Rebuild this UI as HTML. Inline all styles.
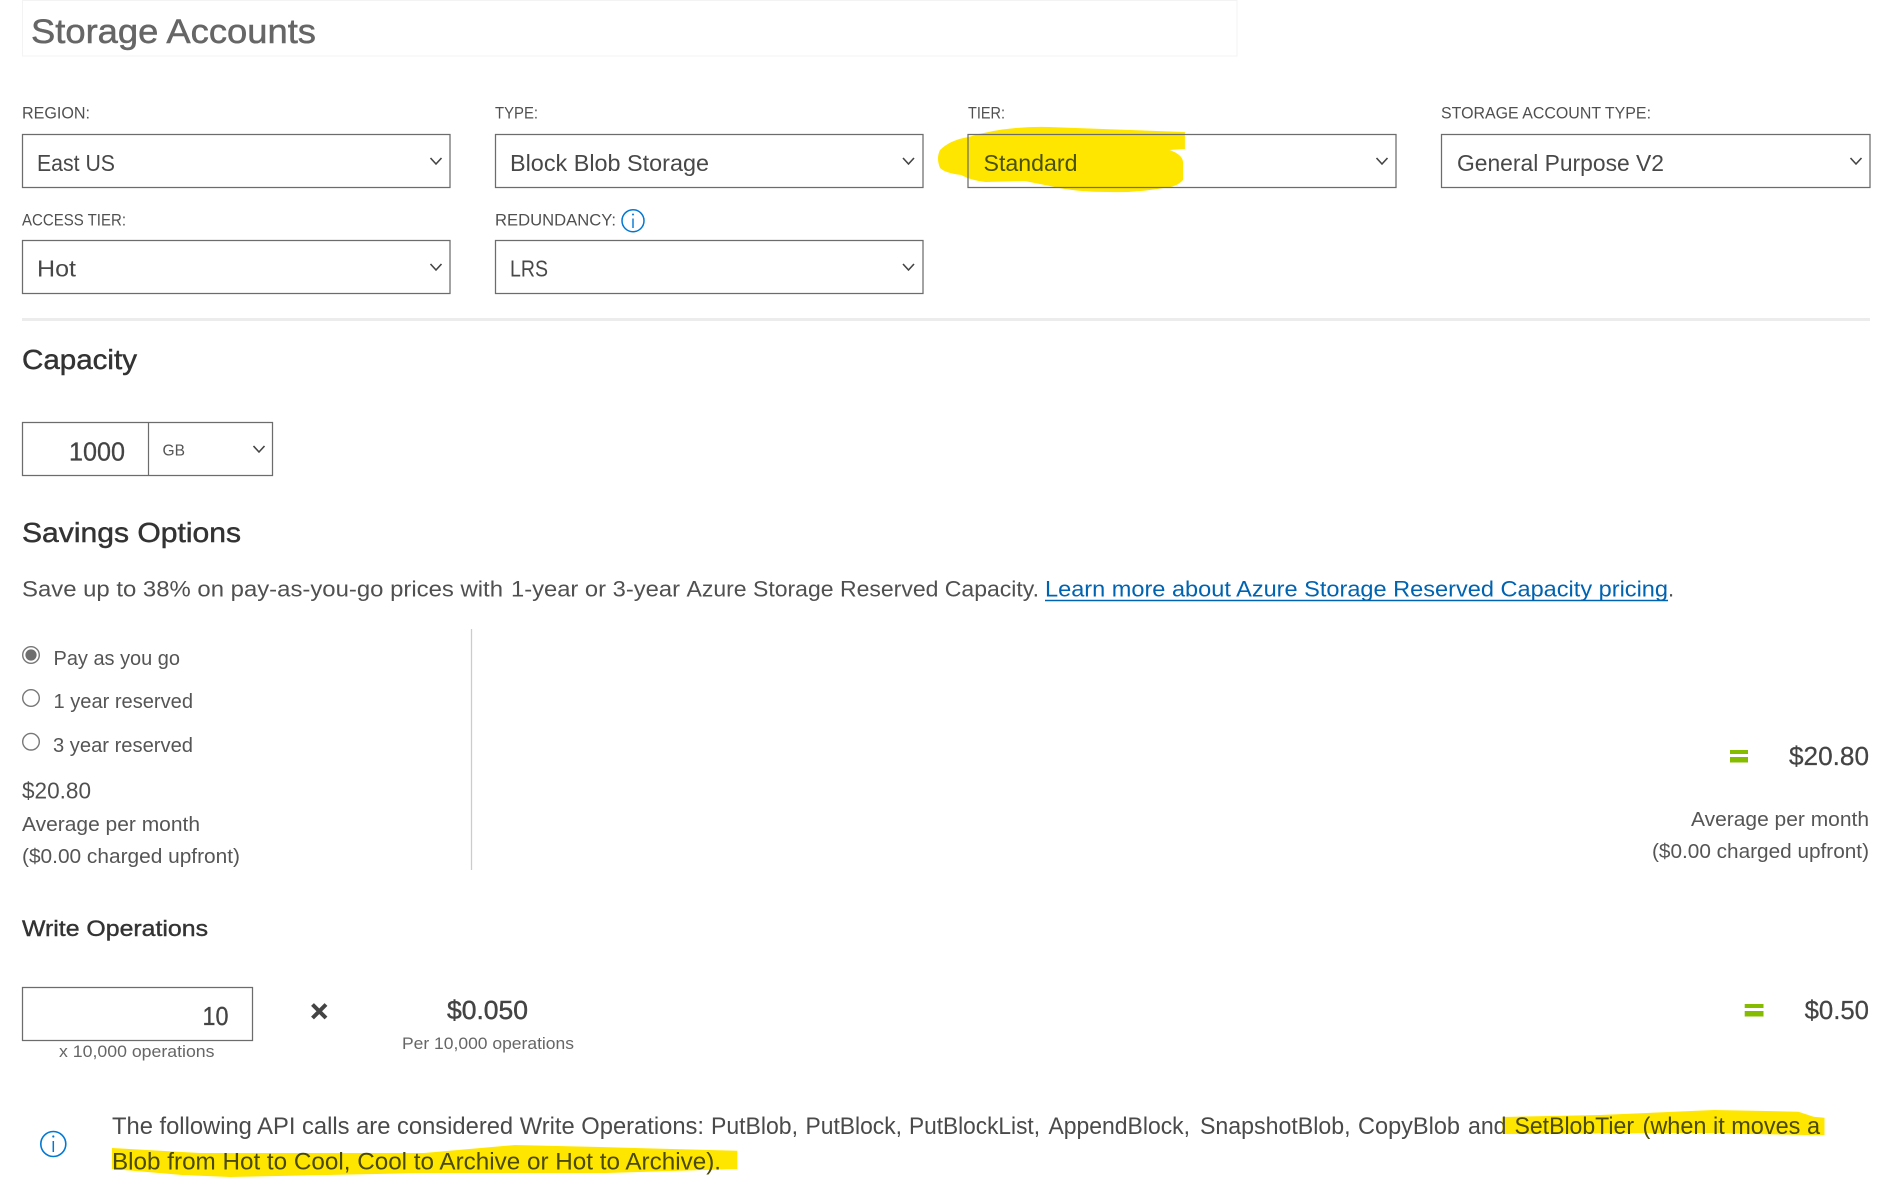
<!DOCTYPE html>
<html lang="en">
<head>
<meta charset="utf-8">
<title>Storage Accounts</title>
<style>
html,body{margin:0;padding:0;background:#fff;width:1888px;height:1188px;overflow:hidden}
svg{display:block}
text{font-family:"Liberation Sans",sans-serif;fill:#505050}
.lab{font-size:17px;fill:#505050}
.sel{font-size:23.5px;fill:#484848}
.h{font-size:27.5px;fill:#333;stroke:#333;stroke-width:.45px}
.sm{font-size:20px;fill:#555}
.p{font-size:22px;fill:#505050}
.n{font-size:24px;fill:#4a4a4a}
.y{font-size:24px;fill:#4a4a00}
.box{fill:none;stroke:#6c6c6c;stroke-width:1.25}
.chev{fill:none;stroke:#444;stroke-width:1.6}
.rad{fill:#fff;stroke:#777;stroke-width:1.4}
</style>
</head>
<body>
<svg xmlns="http://www.w3.org/2000/svg" width="1888" height="1188" viewBox="0 0 1888 1188">
<rect width="1888" height="1188" fill="#fff"/>

<!-- title -->
<rect x="22.5" y="0.5" width="1214.5" height="55.5" fill="#fff" stroke="#f3f3f3"/>
<text x="31" y="43" font-size="34.5" style="fill:#666" stroke="#666" stroke-width=".5" textLength="285" lengthAdjust="spacingAndGlyphs">Storage Accounts</text>

<!-- yellow highlights -->
<path d="M940 150 Q950 140 968.4 137 Q1005 126 1048.8 127 L1184.9 132 L1184.9 149 L1169.7 150 Q1183.5 155 1183 163 L1183 180 Q1177 187 1163.7 188 Q1135 193 1109.3 192 Q1075 192 1054.9 187 L1024.6 181 L985.3 182 Q970 180 961.2 175 Q945 173 940 168 Q936 158 940 150Z" fill="#ffe600"/>
<path d="M1502.3 1117 L1600 1115 L1713.9 1110 L1798.5 1111.7 L1813.6 1116.7 L1824.5 1117.7 L1824.5 1135 L1804.6 1135 L1700 1133 L1502.3 1134Z" fill="#ffe600"/>
<path d="M112 1148 L200 1153 L424 1153 L515 1145 L600 1147 L737.4 1150.7 L737.4 1169 L606 1173 L424 1173 L230 1177 L182 1175 L112 1169Z" fill="#ffe600"/>

<!-- labels row 1 -->
<text class="lab" x="22" y="118.5" textLength="68" lengthAdjust="spacingAndGlyphs">REGION:</text>
<text class="lab" x="495" y="118.5" textLength="43" lengthAdjust="spacingAndGlyphs">TYPE:</text>
<text class="lab" x="968" y="118.5" textLength="37" lengthAdjust="spacingAndGlyphs">TIER:</text>
<text class="lab" x="1441" y="118.5" textLength="210" lengthAdjust="spacingAndGlyphs">STORAGE ACCOUNT TYPE:</text>

<!-- selects row 1 -->
<rect class="box" x="22.5" y="134.5" width="427.5" height="53"/>
<rect class="box" x="495.5" y="134.5" width="427.5" height="53"/>
<rect class="box" x="968" y="134.5" width="428" height="53"/>
<rect class="box" x="1441.5" y="134.5" width="428.5" height="53"/>
<text class="sel" x="37" y="171" textLength="78" lengthAdjust="spacingAndGlyphs">East US</text>
<text class="sel" x="510" y="171" textLength="199" lengthAdjust="spacingAndGlyphs">Block Blob Storage</text>
<text class="sel" x="983.5" y="171" style="fill:#4a5200" textLength="94" lengthAdjust="spacingAndGlyphs">Standard</text>
<text class="sel" x="1457" y="171" textLength="207" lengthAdjust="spacingAndGlyphs">General Purpose V2</text>
<polyline class="chev" points="430.5,158 436,164 441.5,158"/>
<polyline class="chev" points="903,158 908.5,164 914,158"/>
<polyline class="chev" points="1376.5,158 1382,164 1387.5,158"/>
<polyline class="chev" points="1850.5,158 1856,164 1861.5,158"/>

<!-- labels row 2 -->
<text class="lab" x="22" y="225.5" textLength="104" lengthAdjust="spacingAndGlyphs">ACCESS TIER:</text>
<text class="lab" x="495" y="225.5" textLength="121" lengthAdjust="spacingAndGlyphs">REDUNDANCY:</text>
<circle cx="633" cy="220.7" r="11" fill="none" stroke="#0078d4" stroke-width="1.5"/>
<line x1="633" y1="218.5" x2="633" y2="228" stroke="#0078d4" stroke-width="1.4"/>
<circle cx="633" cy="214.5" r="1" fill="#0078d4"/>

<!-- selects row 2 -->
<rect class="box" x="22.5" y="240.5" width="427.5" height="53"/>
<rect class="box" x="495.5" y="240.5" width="427.5" height="53"/>
<text class="sel" x="37" y="276.5" textLength="39" lengthAdjust="spacingAndGlyphs">Hot</text>
<text class="sel" x="510" y="276.5" textLength="38" lengthAdjust="spacingAndGlyphs">LRS</text>
<polyline class="chev" points="430.5,264 436,270 441.5,264"/>
<polyline class="chev" points="903,264 908.5,270 914,264"/>

<rect x="22" y="318" width="1848" height="3" fill="#ececec"/>

<!-- capacity -->
<text class="h" x="22" y="369" textLength="115" lengthAdjust="spacingAndGlyphs">Capacity</text>
<rect class="box" x="22.5" y="422.5" width="250" height="53"/>
<line x1="148.5" y1="422" x2="148.5" y2="476" stroke="#6c6c6c" stroke-width="1.2"/>
<text x="69" y="460.5" font-size="26" style="fill:#444" stroke="#444" stroke-width=".3" textLength="56" lengthAdjust="spacingAndGlyphs">1000</text>
<text x="162.5" y="455.5" font-size="16" style="fill:#555" textLength="22.5" lengthAdjust="spacingAndGlyphs">GB</text>
<polyline class="chev" points="253.5,446 259,452 264.5,446"/>

<!-- savings -->
<text class="h" x="22" y="542" textLength="219" lengthAdjust="spacingAndGlyphs">Savings Options</text>
<text class="p" x="22" y="596.5" textLength="481" lengthAdjust="spacingAndGlyphs">Save up to 38% on pay-as-you-go prices with</text>
<text class="p" x="511" y="596.5" textLength="169" lengthAdjust="spacingAndGlyphs">1-year or 3-year</text>
<text class="p" x="686.5" y="596.5" textLength="352.5" lengthAdjust="spacingAndGlyphs">Azure Storage Reserved Capacity.</text>
<text x="1045" y="596.5" font-size="22" style="fill:#0063b1" textLength="623" lengthAdjust="spacingAndGlyphs">Learn more about Azure Storage Reserved Capacity pricing</text>
<line x1="1045" y1="600.5" x2="1668" y2="600.5" stroke="#0063b1" stroke-width="1.4"/>
<text class="p" x="1668" y="596.5">.</text>

<!-- radios -->
<circle class="rad" cx="31" cy="655" r="8.3"/>
<circle cx="31" cy="655" r="5.6" fill="#6e6e6e"/>
<circle class="rad" cx="31" cy="698" r="8.3"/>
<circle class="rad" cx="31" cy="741.7" r="8.3"/>
<text class="sm" x="53.5" y="665" textLength="126.5" lengthAdjust="spacingAndGlyphs">Pay as you go</text>
<text class="sm" x="53.5" y="708" textLength="139.5" lengthAdjust="spacingAndGlyphs">1 year reserved</text>
<text class="sm" x="53" y="752" textLength="140" lengthAdjust="spacingAndGlyphs">3 year reserved</text>
<text x="22" y="798.5" font-size="23.5" style="fill:#505050" textLength="69" lengthAdjust="spacingAndGlyphs">$20.80</text>
<text class="sm" x="22" y="831" textLength="178" lengthAdjust="spacingAndGlyphs">Average per month</text>
<text class="sm" x="22" y="863" textLength="218" lengthAdjust="spacingAndGlyphs">($0.00 charged upfront)</text>
<line x1="471.5" y1="629" x2="471.5" y2="870" stroke="#ccc" stroke-width="1.3"/>

<!-- savings total -->
<rect x="1730" y="750" width="18" height="4" fill="#85bc00"/>
<rect x="1730" y="757" width="18" height="5.5" fill="#85bc00"/>
<text x="1789" y="765" font-size="26" style="fill:#444" stroke="#444" stroke-width=".25" textLength="80" lengthAdjust="spacingAndGlyphs">$20.80</text>
<text class="sm" x="1691" y="826" textLength="178" lengthAdjust="spacingAndGlyphs">Average per month</text>
<text class="sm" x="1652" y="858" textLength="217" lengthAdjust="spacingAndGlyphs">($0.00 charged upfront)</text>

<!-- write operations -->
<text x="22" y="936" font-size="22" style="fill:#333" stroke="#333" stroke-width=".4" textLength="186" lengthAdjust="spacingAndGlyphs">Write Operations</text>
<rect class="box" x="22.5" y="987.5" width="230" height="53"/>
<text x="202.5" y="1025" font-size="26" style="fill:#444" stroke="#444" stroke-width=".3" textLength="26" lengthAdjust="spacingAndGlyphs">10</text>
<text x="59" y="1057" font-size="17" style="fill:#666" textLength="155.5" lengthAdjust="spacingAndGlyphs">x 10,000 operations</text>
<path d="M312.5 1004.5 L326 1018 M326 1004.5 L312.5 1018" stroke="#444" stroke-width="4" fill="none"/>
<text x="447" y="1019" font-size="26" style="fill:#444" stroke="#444" stroke-width=".45" textLength="81" lengthAdjust="spacingAndGlyphs">$0.050</text>
<text x="402" y="1049" font-size="17" style="fill:#666" textLength="172" lengthAdjust="spacingAndGlyphs">Per 10,000 operations</text>
<rect x="1744.7" y="1004" width="18.8" height="4" fill="#85bc00"/>
<rect x="1744.7" y="1011" width="18.8" height="5.5" fill="#85bc00"/>
<text x="1804.6" y="1019" font-size="26" style="fill:#444" stroke="#444" stroke-width=".25" textLength="64.4" lengthAdjust="spacingAndGlyphs">$0.50</text>

<!-- note -->
<circle cx="53.3" cy="1144" r="12.5" fill="none" stroke="#0078d4" stroke-width="1.6"/>
<line x1="53.3" y1="1141" x2="53.3" y2="1152" stroke="#0078d4" stroke-width="1.5"/>
<circle cx="53.3" cy="1136.5" r="1.1" fill="#0078d4"/>
<text class="n" x="112" y="1134" textLength="592" lengthAdjust="spacingAndGlyphs">The following API calls are considered Write Operations:</text>
<text class="n" x="711" y="1134" textLength="87" lengthAdjust="spacingAndGlyphs">PutBlob,</text>
<text class="n" x="805.5" y="1134" textLength="96.5" lengthAdjust="spacingAndGlyphs">PutBlock,</text>
<text class="n" x="909" y="1134" textLength="131" lengthAdjust="spacingAndGlyphs">PutBlockList,</text>
<text class="n" x="1048.5" y="1134" textLength="141.5" lengthAdjust="spacingAndGlyphs">AppendBlock,</text>
<text class="n" x="1200" y="1134" textLength="150.5" lengthAdjust="spacingAndGlyphs">SnapshotBlob,</text>
<text class="n" x="1358" y="1134" textLength="102" lengthAdjust="spacingAndGlyphs">CopyBlob</text>
<text class="n" x="1468" y="1134" textLength="38.5" lengthAdjust="spacingAndGlyphs">and</text>
<text class="y" x="1514.5" y="1134" textLength="119.5" lengthAdjust="spacingAndGlyphs">SetBlobTier</text>
<text class="y" x="1642.5" y="1134" textLength="177.5" lengthAdjust="spacingAndGlyphs">(when it moves a</text>
<text class="y" x="112" y="1169.5" textLength="609" lengthAdjust="spacingAndGlyphs">Blob from Hot to Cool, Cool to Archive or Hot to Archive).</text>
</svg>
</body>
</html>
